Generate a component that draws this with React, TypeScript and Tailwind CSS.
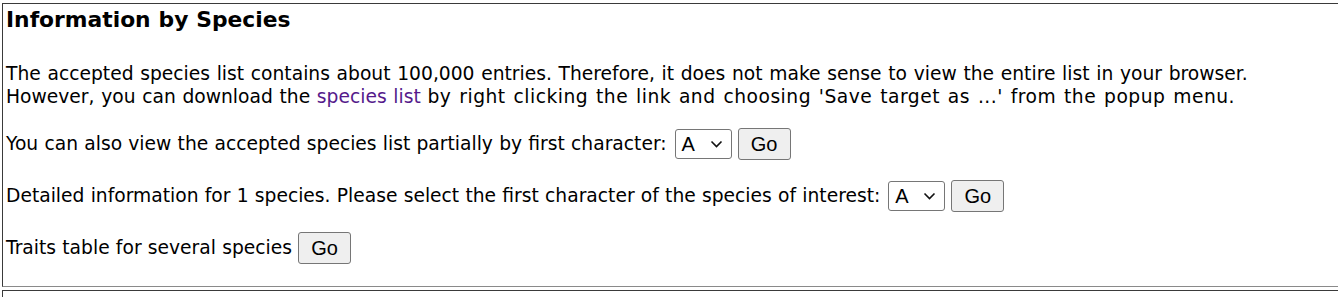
import React from "react";

const FONT = "font-['DejaVu_Sans','Verdana',sans-serif]";

function Select() {
  return (
    <span className="ml-[8px] inline-flex h-[30px] w-[57px] shrink-0 items-center justify-between rounded-[3px] border border-[#767676] bg-white pl-[6px] pr-[8px] font-['Liberation_Sans',Arial,sans-serif] text-[20px] tracking-normal text-black [word-spacing:0]">
      <span>A</span>
      <svg width="13" height="8" viewBox="0 0 13 8" fill="none">
        <path d="M1.5 1.5 L6.5 6.5 L11.5 1.5" stroke="#111" strokeWidth="1.6" />
      </svg>
    </span>
  );
}

function GoButton({ gap = "ml-[6px]" }: { gap?: string }) {
  return (
    <button
      type="button"
      className={`${gap} inline-flex h-[32px] w-[53px] shrink-0 items-center justify-center rounded-[3px] border border-[#767676] bg-[#efefef] font-['Liberation_Sans',Arial,sans-serif] text-[20px] text-black [word-spacing:0]`}
    >
      Go
    </button>
  );
}

export default function App() {
  return (
    <div className={`bg-white pl-[2px] pt-[3px] text-black ${FONT} text-[18.7px] [word-spacing:0.3px]`}>
      <div className="border-b border-l border-t border-b-[#8a8a8a] border-l-[#3a3a3a] border-t-[#3a3a3a] pb-[21px] pl-[3px]">
        <h3 className="mt-[4px] flex h-[24px] items-center text-[21.8px] font-bold">
          Information by Species
        </h3>
        <p className="mt-[30px] whitespace-nowrap leading-[23px] [word-spacing:0.75px]">
          The accepted species list contains about 100,000 entries. Therefore, it does not make sense to view the entire list in your browser.
          <br />
          However, you can download the{" "}
          <a className="text-[#551a8b]" href="#">
            species list
          </a>{" "}
          <span className="tracking-[0.5px] [word-spacing:1.4px]">
            by right clicking the link and choosing 'Save target as ...' from the popup menu.
          </span>
        </p>
        <div className="mt-[19px] flex h-[34px] items-center">
          <span>You can also view the accepted species list partially by first character:</span>
          <Select />
          <GoButton />
        </div>
        <div className="mt-[18px] flex h-[34px] items-center">
          <span>Detailed information for 1 species. Please select the first character of the species of interest:</span>
          <Select />
          <GoButton />
        </div>
        <div className="mt-[18px] flex h-[34px] items-center">
          <span>Traits table for several species</span>
          <GoButton gap="ml-[6px]" />
        </div>
      </div>
      <div className="mt-[3px] h-[10px] border-l border-t border-l-[#3a3a3a] border-t-[#3a3a3a]" />
    </div>
  );
}
